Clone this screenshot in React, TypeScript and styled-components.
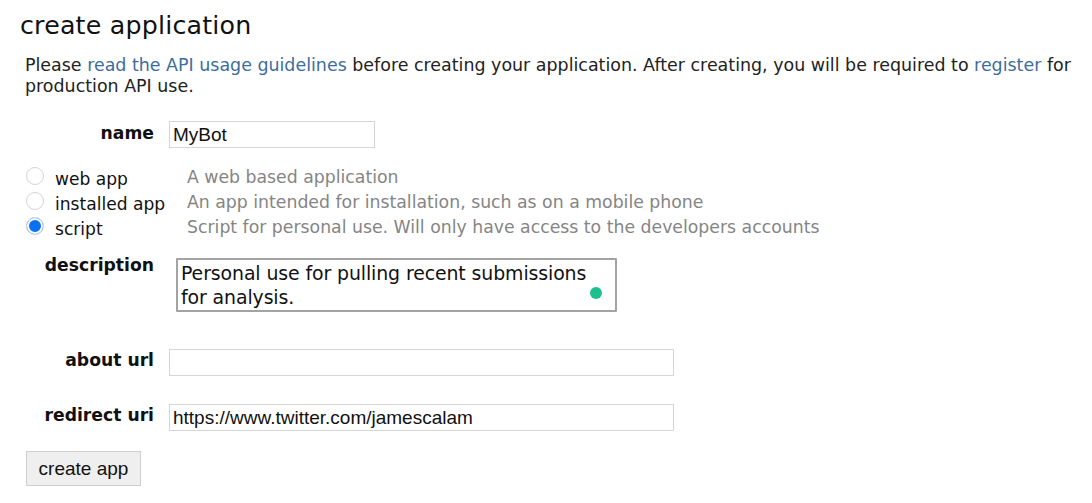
import React from "react";
import styled, { createGlobalStyle } from "styled-components";

const Global = createGlobalStyle`
  html, body { margin: 0; padding: 0; background: #fff; }
  body { font-family: "DejaVu Sans", Verdana, sans-serif; color: #222; }
`;

const Page = styled.div`
  padding: 8px 0 0 0;
  width: 1092px;
`;

const Title = styled.h1`
  margin: 0 0 0 20px;
  font-size: 25.3px;
  font-weight: normal;
  color: #111;
  line-height: 36px;
  letter-spacing: 0.2px;
`;

const Intro = styled.p`
  margin: 11px 0 0 25px;
  font-size: 17.45px;
  line-height: 21px;
  width: 1062px;
  color: #222;
`;

const Link = styled.a`
  color: #3d6d9c;
  text-decoration: none;
`;

const Row = styled.div<{ $top: number }>`
  display: grid;
  grid-template-columns: 154px 1fr;
  column-gap: 15px;
  align-items: start;
  margin-top: ${(p) => p.$top}px;
`;

const Label = styled.label<{ $dy?: number }>`
  text-align: right;
  font-weight: bold;
  font-size: 17.2px;
  line-height: 22px;
  color: #111;
  padding-top: ${(p) => Math.max(p.$dy ?? 0, 0)}px;
  margin-top: ${(p) => Math.min(p.$dy ?? 0, 0)}px;
  font-family: "DejaVu Sans", Verdana, sans-serif;
`;

const TextInput = styled.input<{ $w: number }>`
  width: ${(p) => p.$w}px;
  height: 27px;
  box-sizing: border-box;
  border: 1px solid #d6d6d6;
  padding: 0 3px;
  font-family: "Liberation Sans", Arial, sans-serif;
  font-size: 19px;
  color: #111;
  outline: none;
  background: #fff;
`;

const Radios = styled.div`
  margin-top: 17px;
  display: flex;
  flex-direction: column;
`;

const RadioRow = styled.div`
  display: grid;
  grid-template-columns: 26px 19px 10px 132px 1fr;
  height: 25px;
  align-items: center;
`;

const RadioCircle = styled.span<{ $checked?: boolean }>`
  grid-column: 2;
  width: 18px;
  height: 18px;
  box-sizing: border-box;
  border-radius: 50%;
  border: 1px solid ${(p) => (p.$checked ? "#c9d8ea" : "#d4d4d4")};
  background: ${(p) => (p.$checked ? "#0a6ff0" : "#fff")};
  box-shadow: ${(p) => (p.$checked ? "inset 0 0 0 2px #fff" : "none")};
  margin-top: -3px;
`;

const RadioLabel = styled.span`
  grid-column: 4;
  font-size: 17.1px;
  color: #111;
  padding-top: 3px;
`;

const RadioDesc = styled.span`
  grid-column: 5;
  font-size: 17.3px;
  color: #858585;
  padding-bottom: 2px;
`;

const DescBox = styled.div`
  margin-left: 7px;
  width: 441px;
  height: 54px;
  box-sizing: border-box;
  border: 2px solid #a3a3a3;
  border-radius: 1px;
  padding: 1px 3px;
  position: relative;
  font-size: 18.9px;
  line-height: 24px;
  color: #111;
  font-family: "DejaVu Sans", Verdana, sans-serif;
  letter-spacing: -0.1px;
`;

const Dot = styled.span`
  position: absolute;
  right: 13px;
  top: 27px;
  width: 12px;
  height: 12px;
  border-radius: 50%;
  background: #1dbf8e;
`;

const Button = styled.button`
  margin: 20px 0 0 26px;
  width: 115px;
  height: 35px;
  background: #efefef;
  border: 1px solid #cfcfcf;
  font-family: "Liberation Sans", Arial, sans-serif;
  font-size: 19px;
  color: #111;
  padding: 0;
`;

const radios = [
  { label: "web app", desc: "A web based application", checked: false },
  { label: "installed app", desc: "An app intended for installation, such as on a mobile phone", checked: false },
  { label: "script", desc: "Script for personal use. Will only have access to the developers accounts", checked: true },
];

export default function App() {
  return (
    <Page>
      <Global />
      <Title>create application</Title>
      <Intro>
        Please <Link href="#">read the API usage guidelines</Link> before creating your application. After creating,
        you will be required to <Link href="#">register</Link> for production API use.
      </Intro>
      <Row $top={24}>
        <Label $dy={1}>name</Label>
        <TextInput $w={206} defaultValue="MyBot" />
      </Row>
      <Radios>
        {radios.map((r) => (
          <RadioRow key={r.label}>
            <RadioCircle $checked={r.checked} />
            <RadioLabel>{r.label}</RadioLabel>
            <RadioDesc>{r.desc}</RadioDesc>
          </RadioRow>
        ))}
      </Radios>
      <Row $top={18}>
        <Label $dy={-4}>description</Label>
        <DescBox>
          Personal use for pulling recent submissions
          <br />
          for analysis.
          <Dot />
        </DescBox>
      </Row>
      <Row $top={37}>
        <Label $dy={0}>about url</Label>
        <TextInput $w={505} />
      </Row>
      <Row $top={28}>
        <Label $dy={0}>redirect uri</Label>
        <TextInput $w={505} defaultValue="https://www.twitter.com/jamescalam" />
      </Row>
      <Button>create app</Button>
    </Page>
  );
}
